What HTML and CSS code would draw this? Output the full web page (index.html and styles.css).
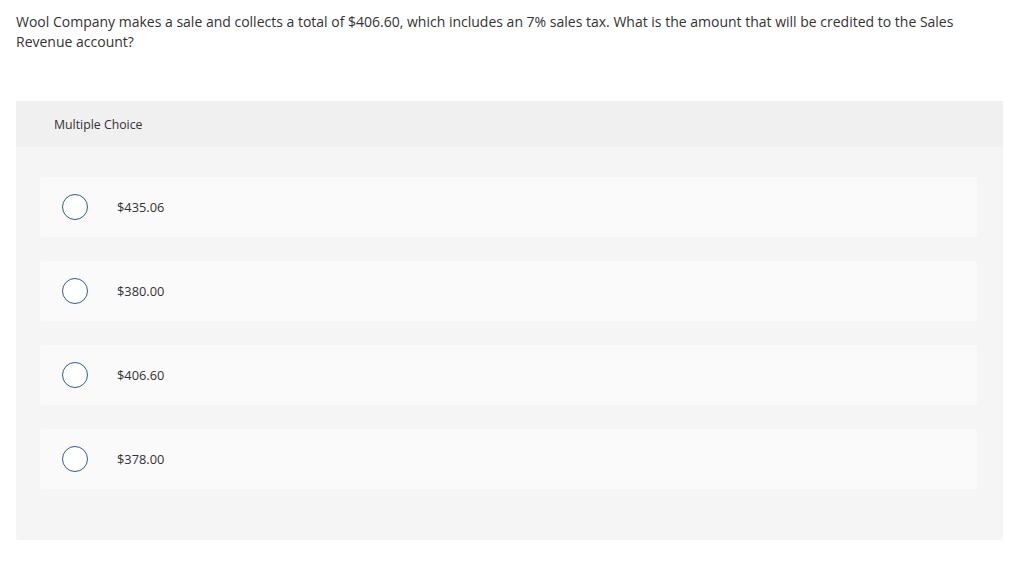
FILE: index.html
```html
<!DOCTYPE html>
<html>
<head>
<meta charset="utf-8">
<link rel="stylesheet" href="styles.css">
</head>
<body>
<div class="page">
  <p class="question">Wool Company makes a sale and collects a total of $406.60, which includes an 7% sales tax. What is the amount that will be credited to the Sales Revenue account?</p>
  <div class="panel">
    <div class="panel-head">Multiple Choice</div>
    <div class="options">
      <div class="option"><span class="radio"></span><span class="label">$435.06</span></div>
      <div class="option"><span class="radio"></span><span class="label">$380.00</span></div>
      <div class="option"><span class="radio"></span><span class="label">$406.60</span></div>
      <div class="option"><span class="radio"></span><span class="label">$378.00</span></div>
    </div>
  </div>
</div>
</body>
</html>
```

FILE: styles.css
```css
html, body {
  margin: 0;
  padding: 0;
  background: #ffffff;
}
body {
  font-family: "Open Sans", "Noto Sans", sans-serif;
  color: #333333;
}
.page {
  padding: 12px 21px 0 16px;
}
.question {
  margin: 0;
  font-size: 14px;
  line-height: 20px;
  max-width: 950px;
}
.panel {
  margin-top: 49px;
  background: #f5f5f5;
  border-radius: 0 0 3px 3px;
}
.panel-head {
  background: #f0f0f0;
  height: 46px;
  display: flex;
  align-items: center;
  padding-left: 38px;
  font-size: 12.3px;
}
.options {
  display: flex;
  flex-direction: column;
  gap: 24px;
  padding: 30px 26px 51px 24px;
}
.option {
  height: 60px;
  background: #fafafa;
  border-radius: 3px;
  display: flex;
  align-items: center;
  padding-left: 22px;
}
.radio {
  width: 24px;
  height: 24px;
  border: 1px solid #2f5d91;
  border-radius: 50%;
  background: #ffffff;
  flex: none;
}
.label {
  margin-left: 29px;
  font-size: 12.8px;
}
```
